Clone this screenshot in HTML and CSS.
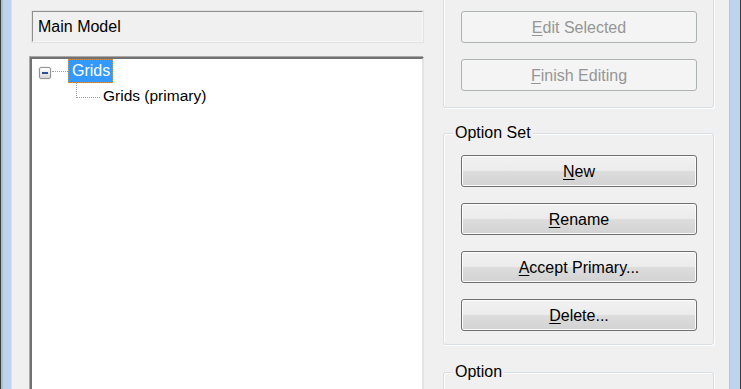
FILE: index.html
```html
<!DOCTYPE html>
<html lang="en">
<head>
    <meta charset="UTF-8">
    <meta name="viewport" content="width=device-width, initial-scale=1.0">
    <title>Design Options</title>
    <link rel="stylesheet" href="styles.css">
</head>
<body>
    <div class="window">
        <div class="frame frame-left"></div>

        <div class="client">
            <div class="left-col">
                <div class="textbox">Main Model</div>

                <div class="tree">
                    <div class="tree-row">
                        <span class="expander"></span>
                        <span class="h-line"></span>
                        <span class="node selected">Grids</span>
                    </div>
                    <div class="tree-row child">
                        <span class="elbow"></span>
                        <span class="node">Grids (primary)</span>
                    </div>
                </div>
            </div>

            <div class="right-col">
                <div class="group group-edit">
                    <button class="btn" disabled><u>E</u>dit Selected</button>
                    <button class="btn" disabled><u>F</u>inish Editing</button>
                </div>

                <div class="group group-set">
                    <span class="group-label">Option Set</span>
                    <button class="btn"><u>N</u>ew</button>
                    <button class="btn"><u>R</u>ename</button>
                    <button class="btn"><u>A</u>ccept Primary...</button>
                    <button class="btn"><u>D</u>elete...</button>
                </div>

                <div class="group group-option">
                    <span class="group-label">Option</span>
                </div>
            </div>
        </div>

        <div class="frame frame-right"></div>
    </div>
</body>
</html>
```

FILE: styles.css
```css
html, body {
    margin: 0;
    padding: 0;
}
body {
    font-family: "Liberation Sans", Arial, sans-serif;
    font-size: 16px;
    color: #000;
    background: #f0f0f0;
    width: 741px;
    height: 389px;
    overflow: hidden;
}
.window {
    display: flex;
    height: 389px;
}
.frame {
    width: 12px;
    flex: none;
    background: #bed3ee;
}
.frame-left {
    width: 11px;
    border-left: 1px solid #3c3c3c;
    box-shadow: inset 2px 0 #a9bfda, inset -1px 0 #d3e1f2;
}
.frame-right {
    width: 11px;
    border-right: 1px solid #3c3c3c;
    box-shadow: inset 1px 0 #aec6e2;
}
.client {
    flex: 1;
    display: flex;
    gap: 19px;
    padding-left: 18px;
    background: #f0f0f0;
}

/* left side */
.left-col {
    width: 394px;
    flex: none;
}
.textbox {
    margin: 11px 0 0 2px;
    width: 391px;
    height: 31px;
    box-sizing: border-box;
    border: 1px solid;
    border-color: #8e8e8e #f7f7f7 #f7f7f7 #8e8e8e;
    box-shadow: 0 0 0 1px #e2e2e2;
    background: #f0f0f0;
    padding-left: 5px;
    line-height: 29px;
}
.tree {
    margin-top: 15px;
    height: 400px;
    box-sizing: border-box;
    background: #fff;
    border: 2px solid;
    border-color: #727272 #e3e3e3 #e3e3e3 #727272;
    box-shadow: -1px -1px 0 #a8a8a8;
}
.tree-row {
    display: flex;
    align-items: center;
    height: 24px;
}
.expander {
    position: relative;
    flex: none;
    width: 12px;
    height: 12px;
    margin-left: 7px;
    margin-top: 3px;
    box-sizing: border-box;
    border: 1px solid #939393;
    border-radius: 2px;
    background: linear-gradient(#ffffff, #d6d6d6);
    box-shadow: 0 0 0 1px #f2f2f2;
}
.expander::after {
    content: "";
    position: absolute;
    left: 2px;
    top: 4px;
    width: 6px;
    height: 2px;
    background: #2c4f9a;
}
.h-line {
    width: 16px;
    height: 0;
    margin-left: 1px;
    border-top: 1px dotted #a0a0a0;
}
.node {
    line-height: 24px;
    padding: 0 3px 0 4px;
    white-space: nowrap;
}
.node.selected {
    background: #3399ff;
    color: #fff;
    outline: 1px dotted #d9924a;
    outline-offset: -1px;
}
.tree-row.child {
    align-items: flex-start;
}
.elbow {
    width: 23px;
    height: 14px;
    margin-left: 44px;
    border-left: 1px dotted #a0a0a0;
    border-bottom: 1px dotted #a0a0a0;
}
.tree-row.child .node {
    padding: 0;
    margin-left: 3px;
    line-height: 26px;
    font-size: 15.5px;
}

/* right side */
.right-col {
    width: 271px;
    flex: none;
}
.group {
    position: relative;
    box-sizing: border-box;
    border: 1px solid #d5dfe5;
    border-radius: 3px;
    box-shadow: inset 1px 1px #ffffff, 1px 1px #ffffff;
    padding: 0 16px 0 17px;
    display: flex;
    flex-direction: column;
    gap: 16px;
}
.group-edit {
    margin-top: -20px;
    padding-top: 30px;
    padding-bottom: 16px;
}
.group-set {
    margin-top: 25px;
    padding-top: 21px;
    padding-bottom: 13px;
}
.group-option {
    margin-top: 27px;
    height: 60px;
}
.group-label {
    position: absolute;
    left: 9px;
    top: -10px;
    padding: 0 2px;
    line-height: 18px;
    background: #f0f0f0;
}
.btn {
    width: 236px;
    height: 32px;
    margin: 0;
    padding: 2px 0 0;
    font-family: inherit;
    font-size: 16px;
    color: #000;
    border: 1px solid #707070;
    border-radius: 3px;
    background: linear-gradient(#f2f2f2 0%, #ebebeb 50%, #dddddd 50%, #d2d2d2 100%);
    box-shadow: inset 0 0 0 1px #fcfcfc;
    cursor: pointer;
}
.btn u {
    text-underline-offset: 2px;
}
.btn:disabled {
    color: #969696;
    border-color: #adb2b5;
    background: #f4f4f4;
    box-shadow: none;
    cursor: default;
}
```
